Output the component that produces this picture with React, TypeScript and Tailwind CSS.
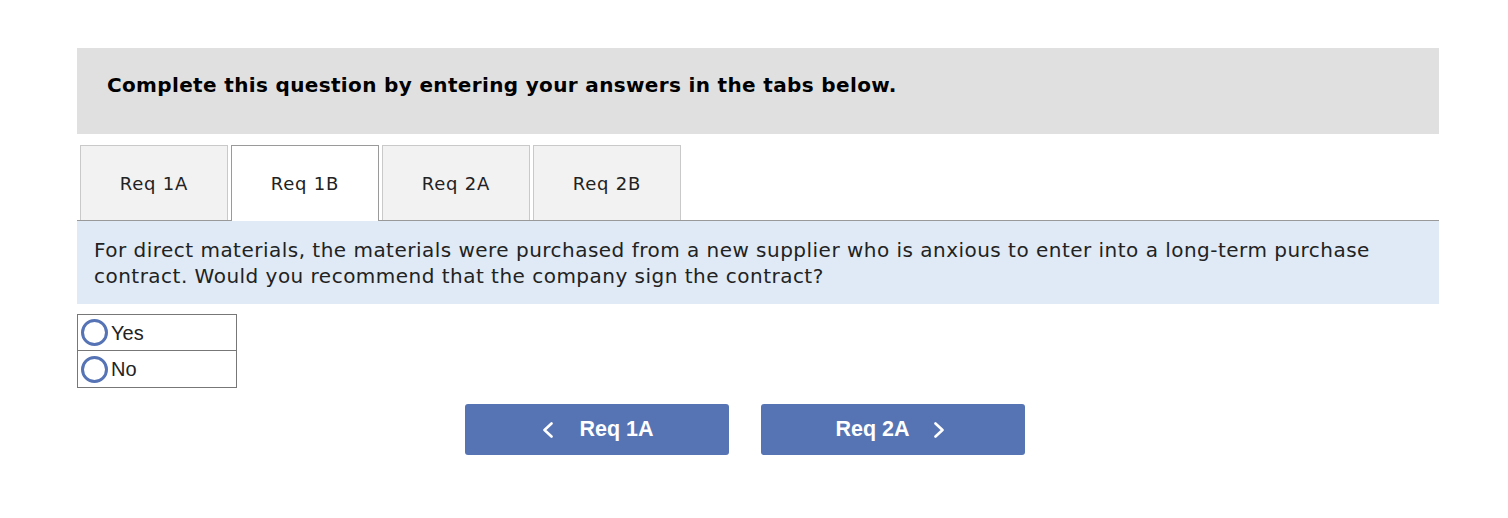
const tabs = ['Req 1A', 'Req 1B', 'Req 2A', 'Req 2B'];
const active = 'Req 1B';

function Chevron({ dir }: { dir: 'left' | 'right' }) {
  return (
    <svg width="12" height="16" viewBox="0 0 12 16" fill="none" stroke="currentColor" strokeWidth="2.6" strokeLinecap="round" strokeLinejoin="round">
      {dir === 'left' ? <polyline points="9.5,1.5 2.5,8 9.5,14.5" /> : <polyline points="2.5,1.5 9.5,8 2.5,14.5" />}
    </svg>
  );
}

export default function App() {
  return (
    <div className="bg-white w-[1508px] h-[518px] pt-12 pl-[77px]" style={{ fontFamily: '"DejaVu Sans", Verdana, sans-serif' }}>
      <div className="w-[1362px]">
        <div className="bg-[#e0e0e0] h-[86px] pl-[30px] pt-[23px]">
          <h2 className="text-[20px] leading-[28px] tracking-[0.35px] font-bold text-black">Complete this question by entering your answers in the tabs below.</h2>
        </div>

        <div className="mt-[11px] flex gap-[3px] pl-[3px] border-b border-[#999999] h-[76px] items-end">
          {tabs.map((t) => (
            <div
              key={t}
              className={
                t === active
                  ? 'w-[148px] h-[76px] -mb-px pb-px bg-white border border-b-0 border-[#9a9a9a] flex items-center justify-center text-[18px] tracking-[0.8px] text-[#222]'
                  : 'w-[148px] h-[75px] bg-[#f2f2f2] border border-b-0 border-[#c9c9c9] flex items-center justify-center text-[18px] tracking-[0.8px] text-[#222]'
              }
            >
              {t}
            </div>
          ))}
        </div>

        <div className="bg-[#dfeaf6] h-[83px] px-[17px] pt-[16px] text-[20px] leading-[26px] tracking-[0.48px] text-[#222]">
          For direct materials, the materials were purchased from a new supplier who is anxious to enter into a long-term purchase contract. Would you recommend that the company sign the contract?
        </div>

        <div className="mt-[10px] w-[160px] border border-[#777] text-[20px] text-[#222]" style={{ fontFamily: '"Liberation Sans", Arial, sans-serif' }}>
          {['Yes', 'No'].map((o, i) => (
            <div key={o} className={i === 0 ? 'h-[36px] flex items-center pl-[3px] border-b border-[#777]' : 'h-[36px] flex items-center pl-[3px]'}>
              <span className="w-[27px] h-[27px] rounded-full border-[3px] border-[#5674b5] mr-[3px] shrink-0" />
              {o}
            </div>
          ))}
        </div>

        <div className="mt-4 flex justify-center gap-8 pr-[26px]" style={{ fontFamily: '"Liberation Sans", Arial, sans-serif' }}>
          <button className="w-[264px] h-[51px] rounded-[3px] bg-[#5674b4] text-white font-bold text-[21.5px] flex items-center justify-center gap-[25px] pl-[2px]">
            <Chevron dir="left" />
            Req 1A
          </button>
          <button className="w-[264px] h-[51px] rounded-[3px] bg-[#5674b4] text-white font-bold text-[21.5px] flex items-center justify-center gap-[23px] pr-[6px]">
            Req 2A
            <Chevron dir="right" />
          </button>
        </div>
      </div>
    </div>
  );
}
